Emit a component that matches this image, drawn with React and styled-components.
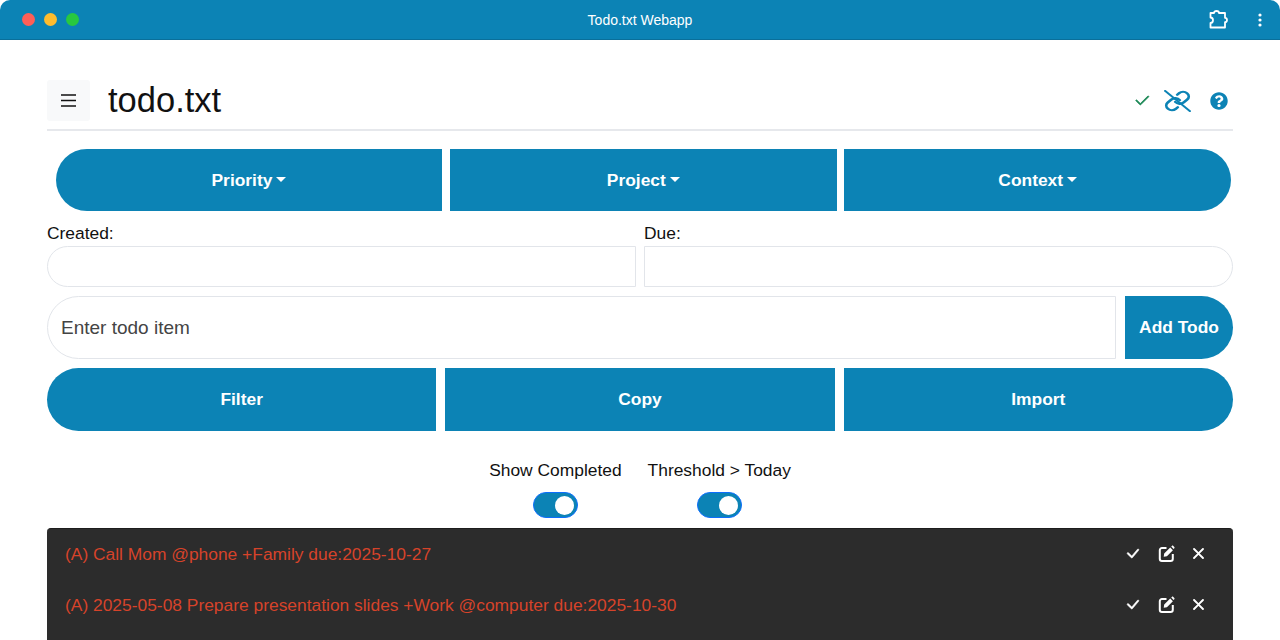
import React from "react";
import styled, { createGlobalStyle } from "styled-components";
import { FaQuestionCircle } from "react-icons/fa";
import { BsCheck2, BsCheckLg, BsXLg } from "react-icons/bs";

const Global = createGlobalStyle`
  html, body {
    margin: 0;
    height: 640px;
    overflow: hidden;
    background: #fff;
    font-family: "Liberation Sans", Arial, sans-serif;
    color: #111;
  }
  * { box-sizing: border-box; }
`;

const blue = "#0c83b5";

const TitleBar = styled.div`
  height: 40px;
  background: ${blue};
  border-bottom: 1px solid #0a6f9a;
  border-radius: 10px 10px 0 0;
  display: grid;
  grid-template-columns: 1fr auto 1fr;
  align-items: center;
  padding: 0 18px;
  color: #fff;
  font-size: 14px;
`;

const Lights = styled.div`
  display: flex;
  gap: 9px;
  margin-left: 4px;
`;

const Light = styled.span`
  width: 13px;
  height: 13px;
  border-radius: 50%;
  background: ${(p) => p.$color};
`;

const BarIcons = styled.div`
  display: flex;
  justify-content: flex-end;
  align-items: center;
  gap: 30px;
`;

const Page = styled.div`
  padding: 40px 47px 0;
`;

const Header = styled.header`
  height: 51px;
  display: flex;
  align-items: flex-start;
  border-bottom: 2px solid #e6e8ec;
`;

const MenuButton = styled.button`
  width: 43px;
  height: 41px;
  border: 0;
  border-radius: 3px;
  background: #f8f9fa;
  display: flex;
  align-items: center;
  justify-content: center;
  padding: 0;
`;

const Title = styled.h1`
  margin: 0 0 0 18px;
  font-size: 34.5px;
  font-weight: 400;
  line-height: 41px;
  flex: 1;
`;

const Status = styled.div`
  display: flex;
  align-items: center;
  gap: 13px;
  height: 41px;
  color: ${blue};
  padding-right: 5px;
`;

const HelpIcon = styled(FaQuestionCircle)`
  margin-left: 6px;
`;

const SavedIcon = styled(BsCheck2)`
  color: #1a8754;
  stroke: currentColor;
  stroke-width: 0.7;
`;

const PillRow = styled.div`
  display: grid;
  grid-template-columns: repeat(3, 1fr);
  gap: ${(p) => p.$gap}px;
  padding: 0 ${(p) => p.$right}px 0 ${(p) => p.$left}px;
  margin-top: ${(p) => p.$top}px;
`;

const Pill = styled.button`
  height: ${(p) => p.$height}px;
  border: 0;
  background: ${blue};
  color: #fff;
  font: 700 17.4px "Liberation Sans", Arial, sans-serif;
  display: flex;
  align-items: center;
  justify-content: center;
  padding: 0;
  &:first-child { border-radius: 32px 0 0 32px; }
  &:last-child { border-radius: 0 32px 32px 0; }
`;

const Caret = styled.span`
  width: 0;
  height: 0;
  margin-left: 4px;
  margin-bottom: 2px;
  border-left: 5px solid transparent;
  border-right: 5px solid transparent;
  border-top: 5px solid #fff;
`;

const DateRow = styled.div`
  display: grid;
  grid-template-columns: 1fr 1fr;
  gap: 8px;
  margin-top: 13px;
`;

const Label = styled.label`
  display: block;
  font-size: 17.4px;
  line-height: 19px;
  margin-bottom: 3px;
`;

const DateInput = styled.div`
  height: 41px;
  border: 1.5px solid #e2e5ea;
  background: #fff;
  border-radius: ${(p) => (p.$right ? "0 21px 21px 0" : "21px 0 0 21px")};
`;

const TodoRow = styled.div`
  display: flex;
  gap: 9px;
  margin-top: 9px;
`;

const TodoInput = styled.div`
  flex: 1;
  height: 63px;
  border: 1.5px solid #e2e5ea;
  border-radius: 32px 0 0 32px;
  padding-left: 13px;
  display: flex;
  align-items: center;
  font-size: 19px;
  color: #444;
`;

const AddButton = styled.button`
  width: 108px;
  height: 63px;
  border: 0;
  border-radius: 0 32px 32px 0;
  background: ${blue};
  color: #fff;
  font: 700 17.4px "Liberation Sans", Arial, sans-serif;
  padding: 0;
`;

const Toggles = styled.div`
  display: flex;
  justify-content: center;
  gap: 26px;
  margin-top: 29px;
`;

const Toggle = styled.div`
  display: flex;
  flex-direction: column;
  align-items: center;
  font-size: 17.4px;
  line-height: 20px;
  gap: 12px;
`;

const Switch = styled.span`
  width: 45px;
  height: 26px;
  border-radius: 13px;
  background: ${blue};
  border: 1px solid #0d6efd;
  display: flex;
  justify-content: flex-end;
  align-items: center;
  padding-right: 3px;
  &::after {
    content: "";
    width: 19px;
    height: 19px;
    border-radius: 50%;
    background: #fff;
  }
`;

const List = styled.ul`
  list-style: none;
  margin: 10px 0 0;
  padding: 0;
  height: 140px;
  background: #2c2c2c;
  border-top: 1px solid #1d1d1d;
  border-radius: 4px 4px 0 0;
`;

const Item = styled.li`
  height: 51px;
  display: flex;
  align-items: center;
  padding: 0 28px 0 18px;
  color: #d6432a;
  font-size: 17.4px;
`;

const ItemText = styled.span`
  flex: 1;
`;

const Actions = styled.div`
  display: flex;
  align-items: center;
  gap: 17px;
  color: #fff;
  margin-bottom: 2px;
`;

const DoneIcon = styled(BsCheckLg)`
  stroke: currentColor;
  stroke-width: 0.5;
`;

const RemoveIcon = styled(BsXLg)`
  stroke: currentColor;
  stroke-width: 1.3;
`;

const EditIcon = () => (
  <svg width="17" height="17" viewBox="0 0 17 17">
    <path d="M8.500 3H4a2.200 2.200 0 0 0-2.200 2.200v8.600A2.200 2.200 0 0 0 4 16h8.600a2.200 2.200 0 0 0 2.200-2.200V9" fill="none" stroke="currentColor" strokeWidth="2" />
    <path d="M6.200 8.600 12.200 2.600l2.700 2.700-6 6-3.200.5zM13.200 1.600l.7-.7c.4-.4 1-.4 1.400 0l1 1c.4.4.4 1 0 1.400l-.7.7z" fill="currentColor" />
  </svg>
);

const todos = [
  "(A) Call Mom @phone +Family due:2025-10-27",
  "(A) 2025-05-08 Prepare presentation slides +Work @computer due:2025-10-30",
];

export default function App() {
  return (
    <>
      <Global />
      <TitleBar>
        <Lights>
          <Light $color="#ff5f57" />
          <Light $color="#febc2e" />
          <Light $color="#28c840" />
        </Lights>
        <span>Todo.txt Webapp</span>
        <BarIcons>
          <svg width="20" height="20" viewBox="0 0 20 20" fill="none" stroke="#fff" strokeWidth="1.8" strokeLinejoin="round">
            <path d="M2.500 3H6C6 1.800 7 1 8.500 1S11 1.800 11 3h6v4.800c1.200 0 2 .9 2 2.200s-.8 2.200-2 2.200v5.300H2.500V13C4 13 5 11.800 5 10.300S4 7.500 2.500 7.500z" />
          </svg>
          <svg width="4" height="14" viewBox="0 0 4 14" fill="#fff">
            <circle cx="2" cy="2" r="1.600" />
            <circle cx="2" cy="7" r="1.600" />
            <circle cx="2" cy="12" r="1.600" />
          </svg>
        </BarIcons>
      </TitleBar>
      <Page>
        <Header>
          <MenuButton aria-label="menu">
            <svg width="15" height="13" viewBox="0 0 15 13" stroke="#111" strokeWidth="1.500">
              <path d="M0 1h15M0 6.500h15M0 12h15" />
            </svg>
          </MenuButton>
          <Title>todo.txt</Title>
          <Status>
            <SavedIcon size={18} />
            <svg width="27" height="22" viewBox="0 0 24 24" preserveAspectRatio="none" fill="none" stroke="currentColor" strokeWidth="2.500" strokeLinecap="round">
              <path d="M10 13a5 5 0 0 0 7.540.54l3-3a5 5 0 0 0-7.070-7.070l-1.720 1.710" />
              <path d="M14 11a5 5 0 0 0-7.540-.54l-3 3a5 5 0 0 0 7.070 7.070l1.710-1.710" />
              <path d="M1 1l22 22" strokeWidth="2" />
            </svg>
            <HelpIcon size={18} />
          </Status>
        </Header>
        <PillRow $gap={7.8} $left={8.7} $right={2} $top={18}>
          {["Priority", "Project", "Context"].map((name) => (
            <Pill key={name} $height={62}>
              {name}
              <Caret />
            </Pill>
          ))}
        </PillRow>
        <DateRow>
          <div>
            <Label>Created:</Label>
            <DateInput />
          </div>
          <div>
            <Label>Due:</Label>
            <DateInput $right />
          </div>
        </DateRow>
        <TodoRow>
          <TodoInput>Enter todo item</TodoInput>
          <AddButton>Add Todo</AddButton>
        </TodoRow>
        <PillRow $gap={9} $left={0} $right={0} $top={9}>
          {["Filter", "Copy", "Import"].map((name) => (
            <Pill key={name} $height={63}>
              {name}
            </Pill>
          ))}
        </PillRow>
        <Toggles>
          <Toggle>
            Show Completed
            <Switch />
          </Toggle>
          <Toggle>
            Threshold &gt; Today
            <Switch />
          </Toggle>
        </Toggles>
        <List>
          {todos.map((todo) => (
            <Item key={todo}>
              <ItemText>{todo}</ItemText>
              <Actions>
                <DoneIcon size={17} />
                <EditIcon />
                <RemoveIcon size={13} />
              </Actions>
            </Item>
          ))}
        </List>
      </Page>
    </>
  );
}
